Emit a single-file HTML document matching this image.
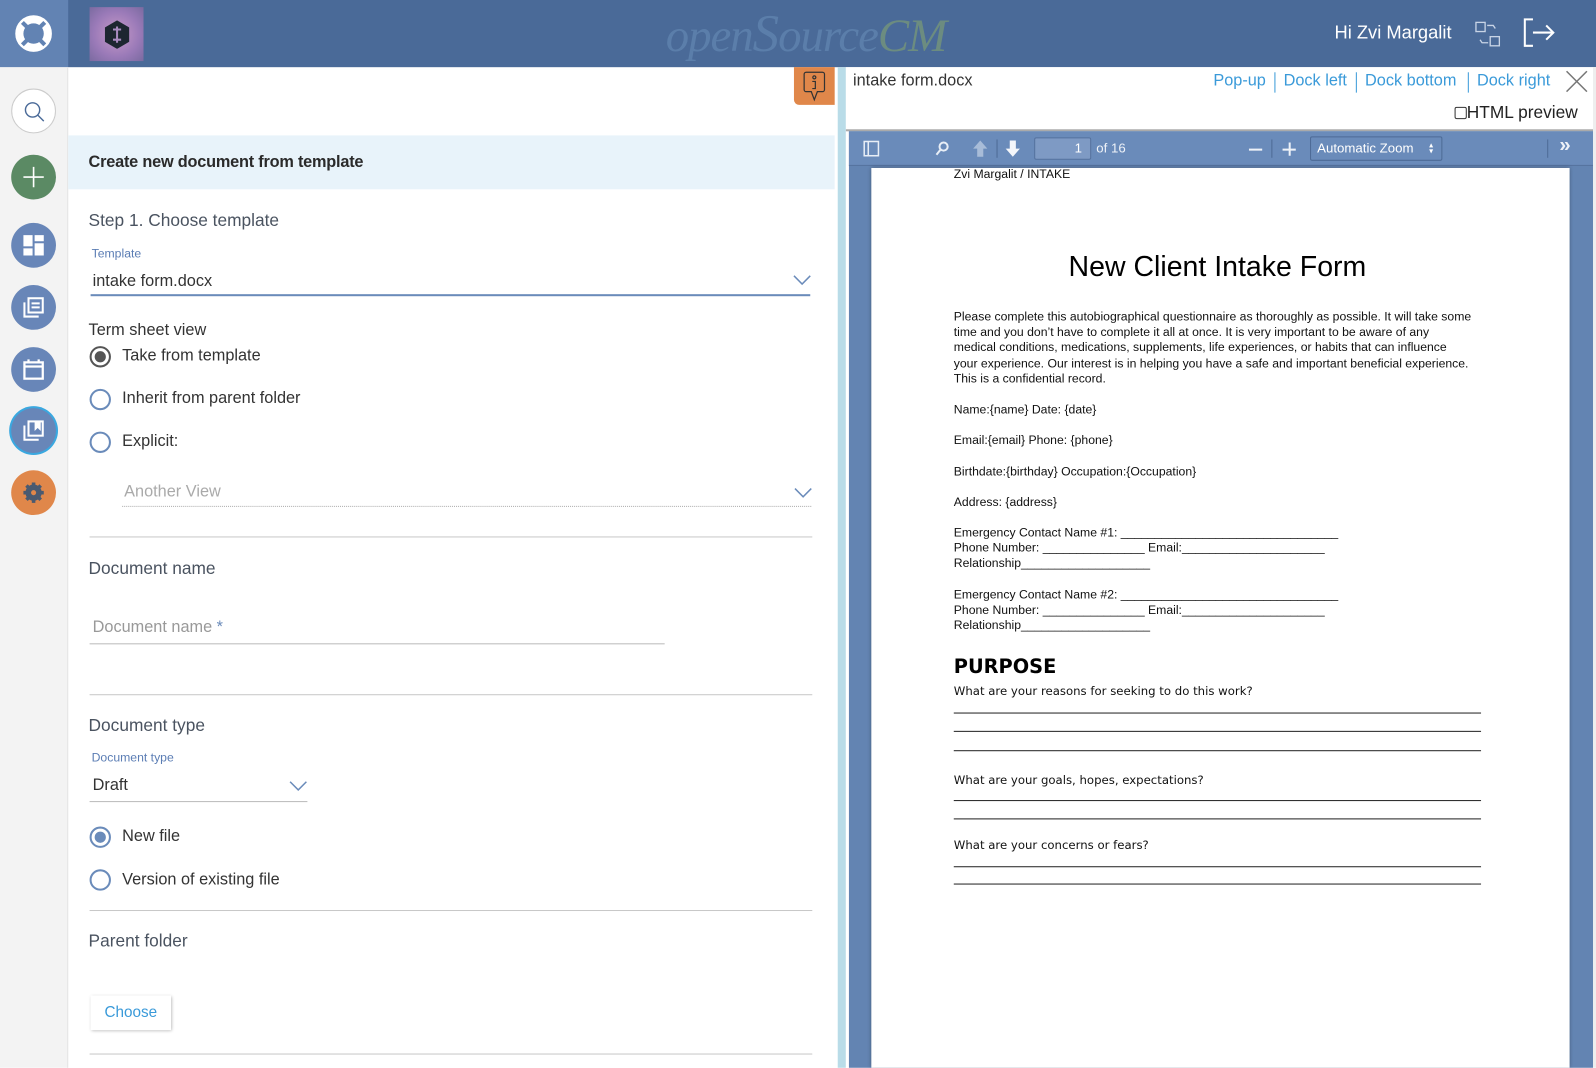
<!DOCTYPE html>
<html><head><meta charset="utf-8"><style>
*{box-sizing:border-box;margin:0;padding:0}
html,body{width:1596px;height:1068px;overflow:hidden;background:#fff}
#w{position:absolute;left:0;top:0;width:1568px;height:1049px;transform:scale(1.0179);transform-origin:0 0;font-family:"Liberation Sans",sans-serif;color:#333}
.a{position:absolute;white-space:nowrap}
.t{line-height:20px}
.hdr{left:0;top:0;width:1568px;height:66px;background:#4a6a98}
.sb{left:0;top:66px;width:67px;height:983px;background:#f3f3f3;border-right:1px solid #e4e4e4}
.ci{position:absolute;left:11px;width:44px;height:44px;border-radius:50%;background:#6886b8}
.ci svg{position:absolute;left:11px;top:11px}
.h{font-size:17px;color:#4a5360}
.lbl{font-size:12px;color:#5b7db4}
.f{font-size:16px;color:#333}
.rad{position:absolute;width:21px;height:21px;border:2px solid #6a8bba;border-radius:50%}
.rad.on::after{content:"";position:absolute;left:3px;top:3px;width:11px;height:11px;border-radius:50%;background:#6a8bba}
.rad.dk{border-color:#555}
.rad.dk::after{background:#555}
.sep{position:absolute;left:88px;width:710px;height:1px;background:#c8c8c8}
.lk{font-size:16px;color:#3a9ad9}
.d{font-size:12px;color:#111;line-height:15.2px}
.ul{position:absolute;left:937px;width:518px;height:1px;background:#222}
</style></head><body><div id="w">
<div class="a hdr"></div>
<div class="a" style="left:0;top:0;width:67px;height:66px;background:#6283b3"></div>
<svg class="a" style="left:14px;top:14px" width="38" height="38" viewBox="0 0 38 38"><circle cx="19" cy="19" r="14" fill="none" stroke="#fff" stroke-width="8"/><g stroke="#6283b3" stroke-width="4"><line x1="8" y1="8" x2="13" y2="13"/><line x1="30" y1="8" x2="25" y2="13"/><line x1="8" y1="30" x2="13" y2="25"/><line x1="30" y1="30" x2="25" y2="25"/></g></svg>
<div class="a" style="left:88px;top:7px;width:53px;height:53px;background:radial-gradient(circle,#c89ac8 0%,#9a7ab8 60%,#7a6aa0 100%)"></div>
<svg class="a" style="left:103px;top:20px" width="24" height="28" viewBox="0 0 24 28"><path d="M12 0 L24 7 L24 21 L12 28 L0 21 L0 7Z" fill="#1d2630"/><path d="M8 9h8M8 19h8M12 6v16" stroke="#a98ac0" stroke-width="2"/></svg>
<div class="a" style="left:654px;top:6px;font-family:'Liberation Serif',serif;font-style:italic;font-size:46px;line-height:56px;color:#5b7eaa;letter-spacing:-1px">open<span style="font-size:52px">S</span>ource<span style="color:#6c8c80">CM</span></div>
<div class="a t" style="left:1311px;top:22px;font-size:18px;color:#fff">Hi Zvi Margalit</div>
<svg class="a" style="left:1448px;top:20px" width="28" height="28" viewBox="0 0 28 28" fill="none" stroke="#c8d4e6" stroke-width="1.3"><rect x="2" y="2" width="9" height="9"/><rect x="16" y="16" width="9" height="9"/><path d="M13 5h6l2 3M14 22H8l-2-3"/></svg>
<svg class="a" style="left:1496px;top:17px" width="32" height="30" viewBox="0 0 32 30" fill="none" stroke="#fff" stroke-width="2"><path d="M10 2H2v26h8M10 15h20M23 8l7 7-7 7"/></svg>

<div class="a sb"></div>
<div class="ci" style="top:87px;background:#fff;border:1px solid #ccc"><svg width="22" height="22" viewBox="0 0 22 22" fill="none" stroke="#4a6a98" stroke-width="1.4"><circle cx="9" cy="9" r="7"/><path d="M14 14l6 6"/></svg></div>
<div class="ci" style="top:152px;background:#5b8a64"><svg width="22" height="22" viewBox="0 0 22 22" stroke="#fff" stroke-width="1.6"><path d="M11 1v20M1 11h20"/></svg></div>
<div class="ci" style="top:219px"><svg width="22" height="22" viewBox="0 0 22 22" fill="#fff"><rect x="1" y="1" width="9" height="11"/><rect x="12" y="1" width="9" height="6"/><rect x="1" y="14" width="9" height="7"/><rect x="12" y="9" width="9" height="12"/></svg></div>
<div class="ci" style="top:280px"><svg width="22" height="22" viewBox="0 0 22 22" fill="none" stroke="#fff" stroke-width="2"><rect x="6" y="2" width="14" height="14"/><path d="M2 6v14h14M9 7h8M9 11h8"/></svg></div>
<div class="ci" style="top:341px"><svg width="22" height="22" viewBox="0 0 22 22" fill="none" stroke="#fff" stroke-width="2.2"><rect x="2" y="4" width="18" height="16"/><path d="M2 8h18M6 1v4M16 1v4"/></svg></div>
<div class="ci" style="top:401px;box-shadow:0 0 0 2px #3aa8e0"><svg width="22" height="22" viewBox="0 0 22 22" fill="none" stroke="#fff" stroke-width="2"><rect x="6" y="2" width="14" height="14"/><path d="M2 6v14h14"/><path d="M13 2v7l2-2 2 2V2" fill="#fff"/></svg></div>
<div class="ci" style="top:462px;background:#e0874a"><svg width="22" height="22" viewBox="0 0 22 22"><circle cx="11" cy="11" r="6" fill="none" stroke="#4a5a70" stroke-width="4"/><path d="M11 1v20M1 11h20M4 4l14 14M18 4L4 18" stroke="#4a5a70" stroke-width="3.5"/><circle cx="11" cy="11" r="2.5" fill="#e0874a"/></svg></div>

<div class="a" style="left:780px;top:66px;width:40px;height:37px;background:#e0874a;border-radius:0 0 0 5px"></div>
<svg class="a" style="left:788px;top:69px" width="24" height="32" viewBox="0 0 24 32" fill="none" stroke="#333" stroke-width="1.2"><path d="M4 2h16a2 2 0 0 1 2 2v15a2 2 0 0 1-2 2h-5l-3 8-3-8H4a2 2 0 0 1-2-2V4a2 2 0 0 1 2-2z"/><circle cx="12" cy="7" r="1.5"/><path d="M10 11h3v7h-3"/></svg>

<div class="a" style="left:67px;top:133px;width:753px;height:53px;background:#e8f3fa"></div>
<div class="a t" style="left:87px;top:150px;font-size:16px;color:#2a2a2a;font-weight:bold;-webkit-text-stroke:0;letter-spacing:-0.2px;font-weight:600">Create new document from template</div>
<div class="a t h" style="left:87px;top:207px">Step 1. Choose template</div>
<div class="a lbl" style="left:90px;top:242px">Template</div>
<div class="a t f" style="left:91px;top:267px">intake form.docx</div>
<div class="a" style="left:89px;top:289px;width:707px;height:2px;background:#6a8bba"></div>
<svg class="a" style="left:779px;top:270px" width="18" height="11"><path d="M1 1l8 8 8-8" fill="none" stroke="#6a8bba" stroke-width="1.5"/></svg>
<div class="a t" style="left:87px;top:315px;font-size:16px;color:#333">Term sheet view</div>
<div class="rad on dk" style="left:88px;top:340px"></div>
<div class="a t f" style="left:120px;top:340px">Take from template</div>
<div class="rad" style="left:88px;top:382px"></div>
<div class="a t f" style="left:120px;top:382px">Inherit from parent folder</div>
<div class="rad" style="left:88px;top:424px"></div>
<div class="a t f" style="left:120px;top:424px">Explicit:</div>
<div class="a t" style="left:122px;top:474px;font-size:16px;color:#aaa">Another View</div>
<div class="a" style="left:120px;top:497px;width:677px;border-top:1px dotted #aaa"></div>
<svg class="a" style="left:780px;top:479px" width="18" height="11"><path d="M1 1l8 8 8-8" fill="none" stroke="#6a8bba" stroke-width="1.5"/></svg>
<div class="sep" style="top:527px"></div>
<div class="a t h" style="left:87px;top:549px">Document name</div>
<div class="a t" style="left:91px;top:607px;font-size:16px;color:#999">Document name <span style="color:#6a8bba">*</span></div>
<div class="a" style="left:88px;top:632px;width:565px;height:1px;background:#bbb"></div>
<div class="sep" style="top:682px"></div>
<div class="a t h" style="left:87px;top:703px">Document type</div>
<div class="a lbl" style="left:90px;top:737px">Document type</div>
<div class="a t f" style="left:91px;top:762px">Draft</div>
<div class="a" style="left:88px;top:787px;width:214px;height:1px;background:#bbb"></div>
<svg class="a" style="left:284px;top:767px" width="18" height="11"><path d="M1 1l8 8 8-8" fill="none" stroke="#6a8bba" stroke-width="1.5"/></svg>
<div class="rad on" style="left:88px;top:812px"></div>
<div class="a t f" style="left:120px;top:812px">New file</div>
<div class="rad" style="left:88px;top:854px"></div>
<div class="a t f" style="left:120px;top:855px">Version of existing file</div>
<div class="sep" style="top:894px"></div>
<div class="a t h" style="left:87px;top:915px">Parent folder</div>
<div class="a" style="left:89px;top:978px;width:79px;height:34px;background:#fff;box-shadow:1px 1px 3px rgba(0,0,0,.3);font-size:15px;color:#3a9ad9;text-align:center;line-height:34px">Choose</div>
<div class="sep" style="top:1035px"></div>

<div class="a" style="left:823px;top:66px;width:8px;height:983px;background:#b9dce8"></div>
<div class="a" style="left:831px;top:66px;width:737px;height:983px;background:#fff"></div>
<div class="a t" style="left:838px;top:70px;font-size:16px;color:#333">intake form.docx</div>
<div class="a t lk" style="left:1192px;top:70px">Pop-up</div>
<div class="a" style="left:1252px;top:71px;width:1px;height:20px;background:#3a9ad9"></div>
<div class="a t lk" style="left:1261px;top:70px">Dock left</div>
<div class="a" style="left:1332px;top:71px;width:1px;height:20px;background:#3a9ad9"></div>
<div class="a t lk" style="left:1341px;top:70px">Dock bottom</div>
<div class="a" style="left:1442px;top:71px;width:1px;height:20px;background:#3a9ad9"></div>
<div class="a t lk" style="left:1451px;top:70px">Dock right</div>
<svg class="a" style="left:1538px;top:69px" width="22" height="22"><path d="M1 1l20 20M21 1L1 21" stroke="#777" stroke-width="1.5"/></svg>
<div class="a t" style="left:1429px;top:101px;font-size:17px;color:#222"><span style="display:inline-block;width:12px;height:12px;border:1px solid #333;border-radius:2px;vertical-align:-1px"></span>HTML preview</div>
<div class="a" style="left:831px;top:127px;width:734px;height:2px;background:#aaa"></div>
<div class="a" style="left:834px;top:129px;width:731px;height:920px;background:#6384b2"></div>
<div class="a" style="left:834px;top:129px;width:731px;height:34px;background:#6a8bba;border-bottom:1px solid #55729e"></div>
<svg class="a" style="left:848px;top:138px" width="16" height="16" fill="none" stroke="#e8eef6" stroke-width="1.5"><rect x="1" y="1" width="14" height="14"/><path d="M5 1v14"/></svg>
<svg class="a" style="left:918px;top:138px" width="16" height="16" fill="none" stroke="#e8eef6" stroke-width="2"><circle cx="9" cy="6" r="4"/><path d="M6 9l-4 5"/></svg>
<svg class="a" style="left:954px;top:137px" width="18" height="18" fill="#a8bcd8"><path d="M9 1l7 8h-4v8H6V9H2z"/></svg>
<div class="a" style="left:979px;top:137px;width:1px;height:18px;background:#4d6a96"></div>
<svg class="a" style="left:986px;top:137px" width="18" height="18" fill="#f4f6fa"><path d="M9 17l7-8h-4V1H6v8H2z"/></svg>
<div class="a" style="left:1016px;top:135px;width:56px;height:22px;background:#7e9ac4;border:1px solid #55729e;border-radius:2px;color:#fff;font-size:13px;text-align:right;padding-right:8px;line-height:20px">1</div>
<div class="a" style="left:1077px;top:138px;font-size:13px;color:#eef2f8">of 16</div>
<div class="a" style="left:1227px;top:146px;width:13px;height:2px;background:#eef2f8"></div>
<div class="a" style="left:1249px;top:137px;width:1px;height:18px;background:#4d6a96"></div>
<div class="a" style="left:1260px;top:146px;width:13px;height:2px;background:#eef2f8"></div>
<div class="a" style="left:1266px;top:140px;width:2px;height:13px;background:#eef2f8"></div>
<div class="a" style="left:1287px;top:134px;width:130px;height:24px;background:#6a8bba;border:1px solid #4d6a96;border-radius:2px;color:#fff;font-size:13px;line-height:22px;padding-left:6px">Automatic Zoom<span style="position:absolute;right:8px;top:5px;font-size:8px;line-height:6px;text-align:center">▴<br>▾</span></div>
<div class="a" style="left:1520px;top:137px;width:1px;height:18px;background:#4d6a96"></div>
<div class="a" style="left:1532px;top:132px;font-size:20px;color:#eef2f8;font-weight:bold">»</div>
<div class="a" style="left:856px;top:165px;width:686px;height:884px;background:#fff;box-shadow:0 0 4px rgba(0,0,0,.4)"></div>
<div class="a d" style="left:937px;top:164px">Zvi Margalit / INTAKE</div>
<div class="a" style="left:856px;top:245px;width:680px;text-align:center;font-size:28px;line-height:34px;color:#000">New Client Intake Form</div>
<div class="a d" style="left:937px;top:304px">Please complete this autobiographical questionnaire as thoroughly as possible. It will take some<br>time and you don’t have to complete it all at once. It is very important to be aware of any<br>medical conditions, medications, supplements, life experiences, or habits that can influence<br>your experience. Our interest is in helping you have a safe and important beneficial experience.<br>This is a confidential record.</div>
<div class="a d" style="left:937px;top:395px">Name:{name} Date: {date}</div>
<div class="a d" style="left:937px;top:425px">Email:{email} Phone: {phone}</div>
<div class="a d" style="left:937px;top:456px">Birthdate:{birthday} Occupation:{Occupation}</div>
<div class="a d" style="left:937px;top:486px">Address: {address}</div>
<div class="a d" style="left:937px;top:516px">Emergency Contact Name #1: ________________________________<br>Phone Number: _______________ Email:_____________________<br>Relationship___________________</div>
<div class="a d" style="left:937px;top:577px">Emergency Contact Name #2: ________________________________<br>Phone Number: _______________ Email:_____________________<br>Relationship___________________</div>
<div class="a" style="left:937px;top:643px;font-family:'DejaVu Sans',sans-serif;font-weight:bold;font-size:19px;line-height:24px;color:#000">PURPOSE</div>
<div class="a" style="left:937px;top:671px;font-family:'DejaVu Sans',sans-serif;font-size:11.5px;line-height:16px;color:#111">What are your reasons for seeking to do this work?</div>
<div class="ul" style="top:700px"></div><div class="ul" style="top:718px"></div><div class="ul" style="top:737px"></div>
<div class="a" style="left:937px;top:758px;font-family:'DejaVu Sans',sans-serif;font-size:11.5px;line-height:16px;color:#111">What are your goals, hopes, expectations?</div>
<div class="ul" style="top:786px"></div><div class="ul" style="top:804px"></div>
<div class="a" style="left:937px;top:822px;font-family:'DejaVu Sans',sans-serif;font-size:11.5px;line-height:16px;color:#111">What are your concerns or fears?</div>
<div class="ul" style="top:851px"></div><div class="ul" style="top:868px"></div>
<div class="a" style="left:1565px;top:66px;width:3px;height:983px;background:#eee"></div>
</div></body></html>
